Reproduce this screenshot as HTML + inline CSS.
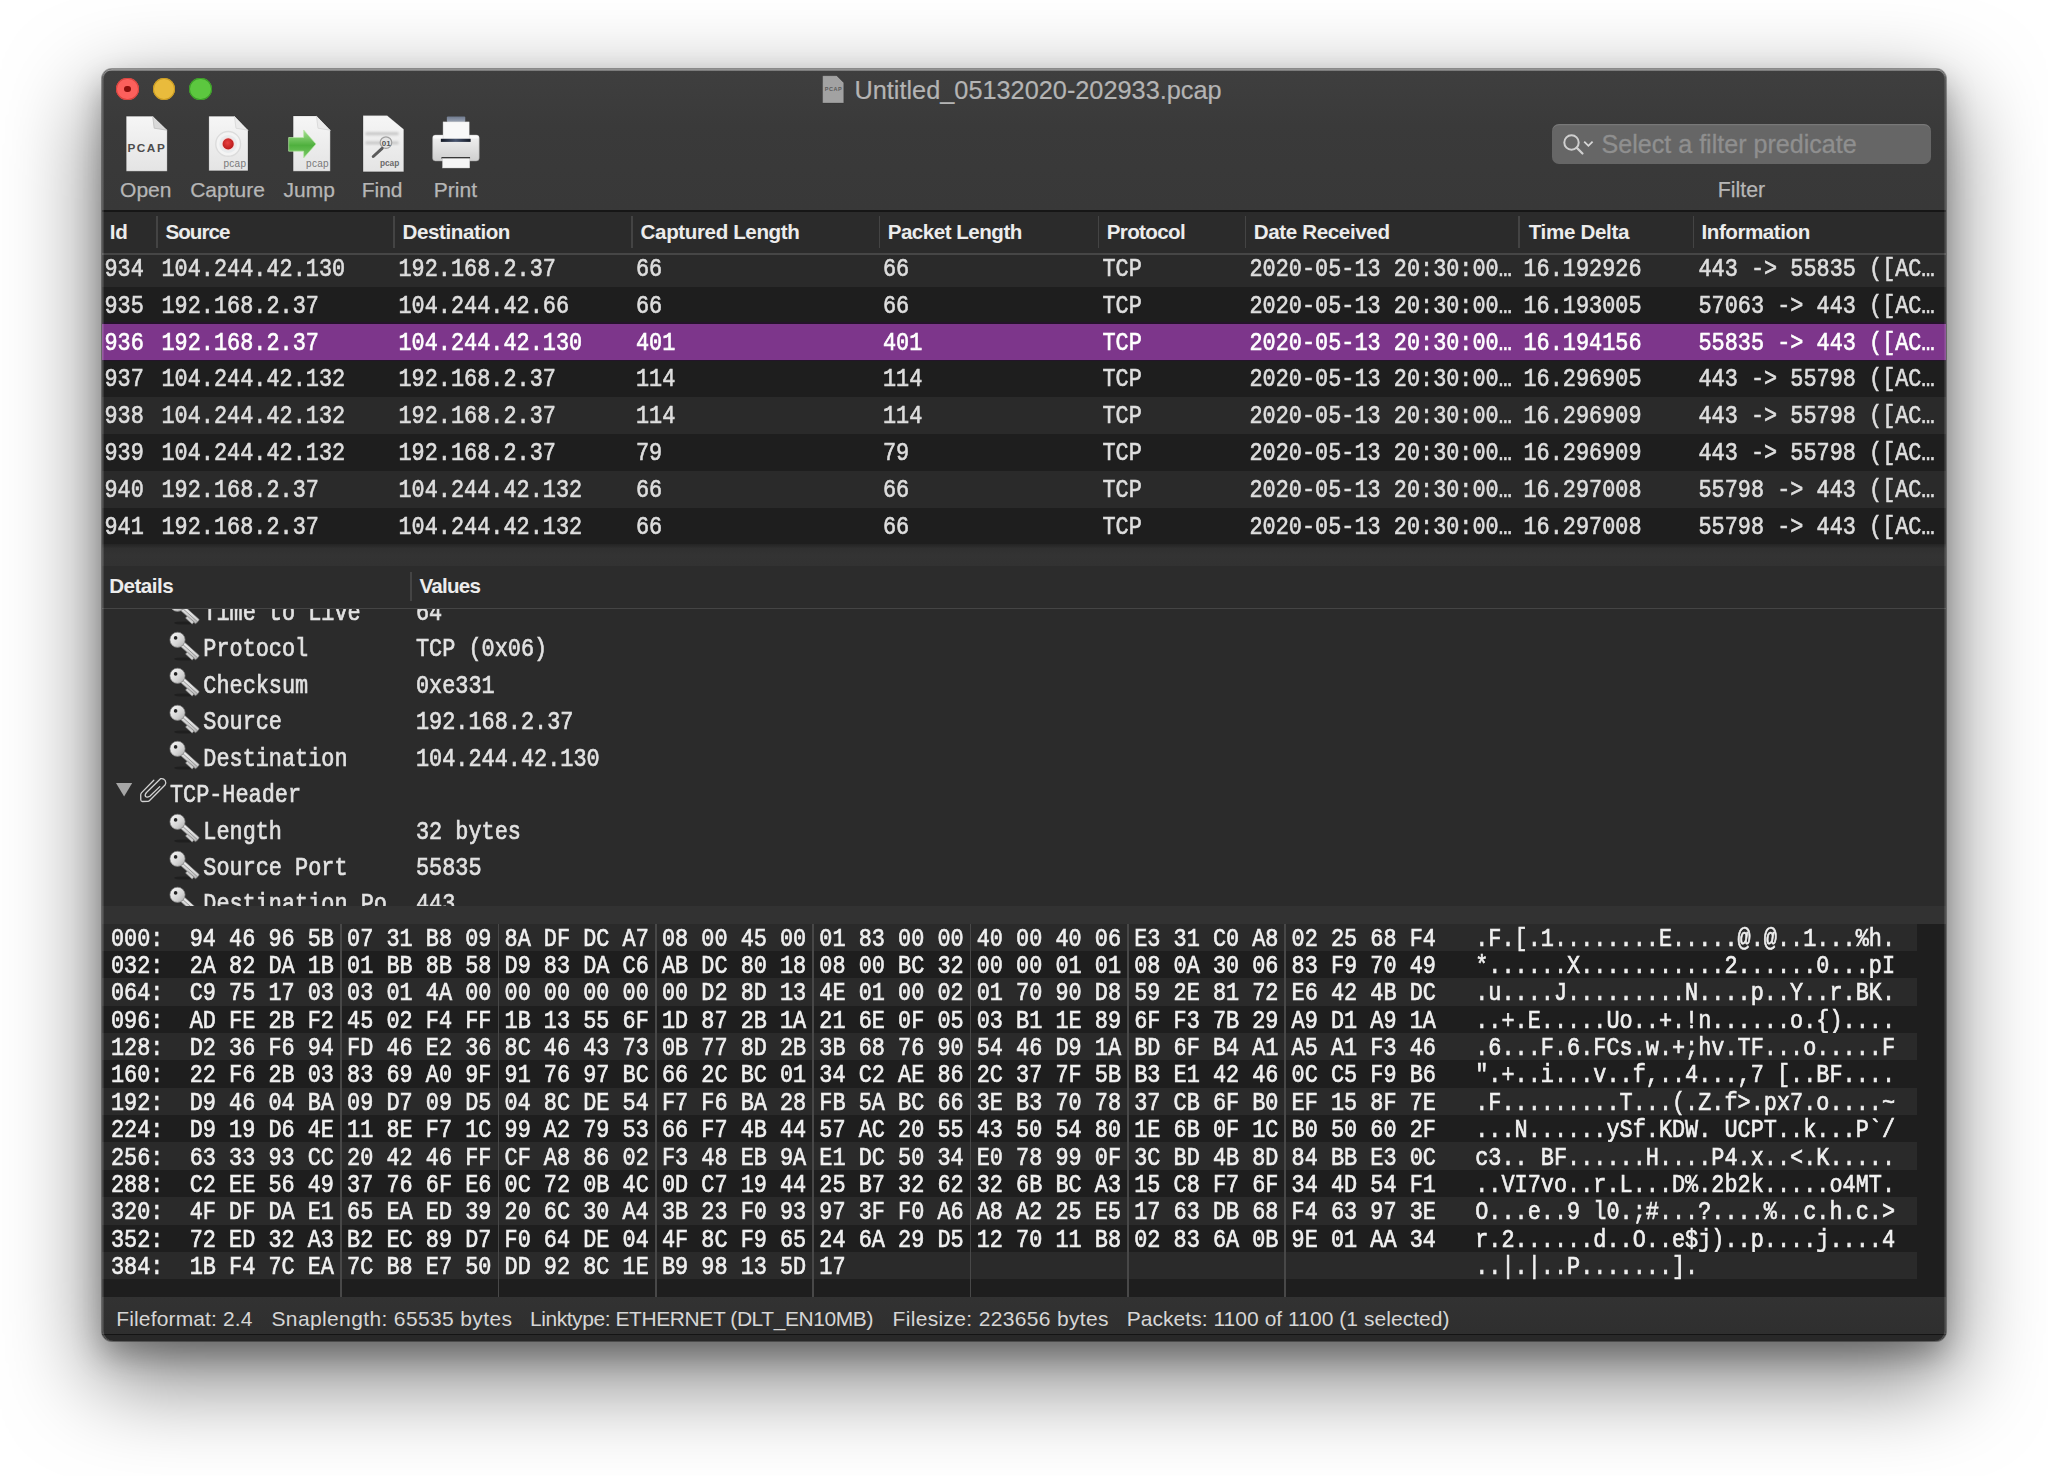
<!DOCTYPE html><html><head><meta charset="utf-8"><style>
html,body{margin:0;padding:0;background:#fff;width:2048px;height:1476px;overflow:hidden}
*{box-sizing:border-box}
.win{position:absolute;left:101.6px;top:68.8px;width:1844.8000000000002px;height:1272.7px;border-radius:10px;overflow:hidden;
 background:#2b2b2b;}
.shadow{position:absolute;left:101.6px;top:68.8px;width:1844.8000000000002px;height:1272.7px;border-radius:10px;
 box-shadow:0 34px 90px 6px rgba(0,0,0,0.50), 0 14px 30px rgba(0,0,0,0.28), 0 0 0 1px rgba(0,0,0,0.35);}
.a{position:absolute}
.m{font-family:"Liberation Mono", monospace;font-size:21.867px;white-space:pre;line-height:30px;-webkit-text-stroke:0.55px currentColor}
.s{font-family:"Liberation Sans", sans-serif;white-space:pre;}
.hd{font-size:21.6px;line-height:30px;color:#ededed;-webkit-text-stroke:0.6px #ededed}
.sy{display:inline-block;transform:scaleY(1.22);transform-origin:50% 20.00px;}
</style></head><body>
<div class="shadow"></div>
<div class="win">
<div class="a" style="left:0;top:0;width:100%;height:141.2px;background:linear-gradient(#3f3f3f,#3a3a3a 40%,#383838)"></div>
<div class="a" style="left:0;top:141.2px;width:100%;height:2px;background:#161616"></div>
<div class="a" style="left:0;top:0;width:100%;height:2px;background:rgba(255,255,255,0.22)"></div>
<div class="a" style="left:14.400000000000002px;top:8.900000000000002px;width:22.6px;height:22.6px;border-radius:50%;background:#fc605c;box-shadow:inset 0 0 0 1px #d8443f"></div>
<div class="a" style="left:51.10000000000001px;top:8.900000000000002px;width:22.6px;height:22.6px;border-radius:50%;background:#e9bb3c;box-shadow:inset 0 0 0 1px #c99a22"></div>
<div class="a" style="left:87.40000000000002px;top:8.900000000000002px;width:22.6px;height:22.6px;border-radius:50%;background:#5cc73f;box-shadow:inset 0 0 0 1px #3a9a27"></div>
<div class="a" style="left:22.400000000000002px;top:16.900000000000002px;width:6.6px;height:6.6px;border-radius:50%;background:#8c0f0c"></div>
<svg class="a" style="left:718.4px;top:4.200000000000003px" width="26" height="32" viewBox="820 73 26 32"><path d="M822.6 75.7 L836.7 75.7 L843.7 82.7 L843.7 102.9 L822.6 102.9 Z" fill="#a2a2a2" stroke="rgba(0,0,0,0.3)" stroke-width="0.5"/><text x="833.5" y="91" text-anchor="middle" font-family="Liberation Sans" font-weight="bold" font-size="5.5" letter-spacing="0.6" fill="#5a5a5a">PCAP</text></svg>
<div class="a s" style="left:752.9px;top:6.200000000000003px;font-size:25.3px;line-height:30px;color:#b4b4b4;-webkit-text-stroke:0.2px #b4b4b4">Untitled_05132020-202933.pcap</div>
<svg class="a" style="left:0;top:0" width="1844.8000000000002" height="141.2" viewBox="101.6 68.8 1844.8000000000002 141.2"><defs><linearGradient id="dg" x1="0" y1="0" x2="0" y2="1"><stop offset="0" stop-color="#f6f6f6"/><stop offset="1" stop-color="#e4e4e4"/></linearGradient><linearGradient id="ga" x1="0" y1="0" x2="0" y2="1"><stop offset="0" stop-color="#a6e090"/><stop offset="0.55" stop-color="#4fb03e"/><stop offset="1" stop-color="#7ccb68"/></linearGradient><radialGradient id="rd" cx="0.45" cy="0.4" r="0.6"><stop offset="0" stop-color="#e84040"/><stop offset="1" stop-color="#b81a1a"/></radialGradient><linearGradient id="pb" x1="0" y1="0" x2="0" y2="1"><stop offset="0" stop-color="#f2f2f2"/><stop offset="1" stop-color="#cfcfcf"/></linearGradient><filter id="bl"><feGaussianBlur stdDeviation="1.2"/></filter></defs><path d="M125.8 116 L152.2 116 L166.7 130 L166.7 171 L125.8 171 Z" fill="url(#dg)" stroke="rgba(0,0,0,0.25)" stroke-width="0.6"/><path d="M152.2 116 L153.7 128 L166.7 130 Z" fill="#d9d9d9"/><path d="M152.2 116 L153.7 128 L166.7 130" fill="none" stroke="#bdbdbd" stroke-width="0.8"/><text x="146.4" y="152.2" text-anchor="middle" font-family="Liberation Sans" font-weight="bold" font-size="11.8" letter-spacing="1.5" fill="#4c4c4c">PCAP</text><path d="M208.4 116 L234 116 L247.5 130 L247.5 170.5 L208.4 170.5 Z" fill="url(#dg)" stroke="rgba(0,0,0,0.25)" stroke-width="0.6"/><path d="M234 116 L235.5 128 L247.5 130 Z" fill="#ebebeb"/><path d="M234 116 L235.5 128 L247.5 130" fill="none" stroke="#d6d6d6" stroke-width="0.8"/><circle cx="227.7" cy="143.7" r="12.4" fill="#f4f4f4" stroke="#dcdcdc" stroke-width="1.4"/><circle cx="227.7" cy="143.7" r="9" fill="#e8ebed"/><circle cx="227.7" cy="143.7" r="6.6" fill="#f6dcdc"/><circle cx="227.7" cy="143.7" r="5.6" fill="url(#rd)"/><text x="245.8" y="166.4" text-anchor="end" font-family="Liberation Sans" font-size="10" letter-spacing="0.3" fill="#7a7a7a">pcap</text><path d="M292.7 115.7 L316 115.7 L329.8 130 L329.8 171 L292.7 171 Z" fill="url(#dg)" stroke="rgba(0,0,0,0.25)" stroke-width="0.6"/><path d="M316 115.7 L317.5 128 L329.8 130 Z" fill="#ebebeb"/><path d="M316 115.7 L317.5 128 L329.8 130" fill="none" stroke="#d6d6d6" stroke-width="0.8"/><path d="M288.2 137.3 L303.2 137.3 L303.2 129.8 L315.5 143.8 L303.2 157.8 L303.2 151 L288.2 151 Z" fill="url(#ga)" stroke="#b8e6a8" stroke-width="0.7"/><text x="328.5" y="166.6" text-anchor="end" font-family="Liberation Sans" font-size="10" letter-spacing="0.3" fill="#7a7a7a">pcap</text><path d="M362.6 115.4 L386.7 115.4 L403.3 129 L403.3 171.6 L362.6 171.6 Z" fill="url(#dg)" stroke="rgba(0,0,0,0.25)" stroke-width="0.6"/><g filter="url(#bl)"><rect x="365" y="132" width="33" height="3" fill="#c8c8c8"/><rect x="365" y="141.2" width="33" height="3" fill="#c8c8c8"/></g><circle cx="385.5" cy="142.4" r="5.8" fill="#e4e4e4" stroke="#a0a0a0" stroke-width="1.2"/><text x="385.8" y="145.6" text-anchor="middle" font-family="Liberation Sans" font-weight="bold" font-size="8" fill="#555">01</text><path d="M381.7 148.1 L372.8 156.3" stroke="#5a5a5a" stroke-width="3" stroke-linecap="round"/><text x="398.8" y="165.6" text-anchor="end" font-family="Liberation Sans" font-weight="bold" font-size="8.3" fill="#6a6a6a">pcap</text><defs><linearGradient id="pt" x1="0" y1="0" x2="0" y2="1"><stop offset="0" stop-color="#6f7a8e"/><stop offset="1" stop-color="#9aa3b3"/></linearGradient><linearGradient id="ps" x1="0" y1="0" x2="1" y2="0"><stop offset="0" stop-color="#141a26"/><stop offset="0.5" stop-color="#46536e"/><stop offset="1" stop-color="#141a26"/></linearGradient></defs><rect x="446.4" y="116.3" width="18.4" height="5.6" rx="1" fill="url(#pt)"/><rect x="432.1" y="134.8" width="46.7" height="26" rx="3" fill="url(#pb)" stroke="#9a9a9a" stroke-width="0.5"/><rect x="432.6" y="135.3" width="45.7" height="3" rx="1.5" fill="#fafafa"/><rect x="442.6" y="121.7" width="26.1" height="17" fill="#f8f8f8" stroke="#cfcfcf" stroke-width="0.4"/><rect x="440.4" y="138.6" width="29.8" height="3.1" fill="url(#ps)"/><rect x="441" y="156.9" width="28.6" height="1.6" fill="#2a2a2a"/><rect x="442" y="158.3" width="27.3" height="9.5" fill="#f6f6f6" stroke="#c4c4c4" stroke-width="0.4"/></svg>
<div class="a s" style="left:-15.799999999999983px;width:120px;text-align:center;top:109.2px;font-size:21px;line-height:24px;color:#b6b6b6;-webkit-text-stroke:0.25px #b6b6b6">Open</div>
<div class="a s" style="left:65.9px;width:120px;text-align:center;top:109.2px;font-size:21px;line-height:24px;color:#b6b6b6;-webkit-text-stroke:0.25px #b6b6b6">Capture</div>
<div class="a s" style="left:147.70000000000002px;width:120px;text-align:center;top:109.2px;font-size:21px;line-height:24px;color:#b6b6b6;-webkit-text-stroke:0.25px #b6b6b6">Jump</div>
<div class="a s" style="left:220.5px;width:120px;text-align:center;top:109.2px;font-size:21px;line-height:24px;color:#b6b6b6;-webkit-text-stroke:0.25px #b6b6b6">Find</div>
<div class="a s" style="left:293.79999999999995px;width:120px;text-align:center;top:109.2px;font-size:21px;line-height:24px;color:#b6b6b6;-webkit-text-stroke:0.25px #b6b6b6">Print</div>
<div class="a" style="left:1450.6000000000001px;top:55.7px;width:379.0px;height:39.400000000000006px;border-radius:7px;background:#666666;box-shadow:inset 0 1.2px 0 rgba(255,255,255,0.12)"></div>
<svg class="a" style="left:1458.4px;top:63.2px" width="36" height="26" viewBox="0 0 36 26"><circle cx="11.5" cy="10.5" r="7.2" fill="none" stroke="#cfcfcf" stroke-width="2"/><path d="M16.6 15.6 L22.5 21.5" stroke="#cfcfcf" stroke-width="2.2" stroke-linecap="round"/><path d="M24.2 9.6 L28.4 13.8 L32.6 9.6" fill="none" stroke="#d6d6d6" stroke-width="1.8"/></svg>
<div class="a s" style="left:1499.9px;top:60.7px;font-size:25.1px;line-height:30px;color:#8f8f8f;-webkit-text-stroke:0.3px #8f8f8f">Select a filter predicate</div>
<div class="a s" style="left:1579.9px;width:120px;text-align:center;top:109.2px;font-size:21.3px;line-height:24px;color:#b6b6b6;-webkit-text-stroke:0.25px #b6b6b6">Filter</div>
<div class="a" style="left:0;top:143.2px;width:100%;height:41.5px;background:#2b2b2b"></div>
<div class="a" style="left:54.45000000000002px;top:147.7px;width:1.5px;height:31.30000000000001px;background:#444"></div>
<div class="a" style="left:291.65px;top:147.7px;width:1.5px;height:31.30000000000001px;background:#444"></div>
<div class="a" style="left:529.65px;top:147.7px;width:1.5px;height:31.30000000000001px;background:#444"></div>
<div class="a" style="left:776.9499999999999px;top:147.7px;width:1.5px;height:31.30000000000001px;background:#444"></div>
<div class="a" style="left:995.9499999999999px;top:147.7px;width:1.5px;height:31.30000000000001px;background:#444"></div>
<div class="a" style="left:1143.0500000000002px;top:147.7px;width:1.5px;height:31.30000000000001px;background:#444"></div>
<div class="a" style="left:1416.8500000000001px;top:147.7px;width:1.5px;height:31.30000000000001px;background:#444"></div>
<div class="a" style="left:1591.3500000000001px;top:147.7px;width:1.5px;height:31.30000000000001px;background:#444"></div>
<div class="a s" style="left:8.100000000000005px;top:147.8px;font-size:20.6px;line-height:30px;font-weight:bold;letter-spacing:-0.250px;color:#ececec">Id</div>
<div class="a s" style="left:63.8px;top:147.8px;font-size:20.6px;line-height:30px;font-weight:bold;letter-spacing:-0.947px;color:#ececec">Source</div>
<div class="a s" style="left:300.99999999999994px;top:147.8px;font-size:20.6px;line-height:30px;font-weight:bold;letter-spacing:-0.427px;color:#ececec">Destination</div>
<div class="a s" style="left:539.0px;top:147.8px;font-size:20.6px;line-height:30px;font-weight:bold;letter-spacing:-0.393px;color:#ececec">Captured Length</div>
<div class="a s" style="left:786.1px;top:147.8px;font-size:20.6px;line-height:30px;font-weight:bold;letter-spacing:-0.508px;color:#ececec">Packet Length</div>
<div class="a s" style="left:1005.1px;top:147.8px;font-size:20.6px;line-height:30px;font-weight:bold;letter-spacing:-0.633px;color:#ececec">Protocol</div>
<div class="a s" style="left:1152.1000000000001px;top:147.8px;font-size:20.6px;line-height:30px;font-weight:bold;letter-spacing:-0.375px;color:#ececec">Date Received</div>
<div class="a s" style="left:1427.1000000000001px;top:147.8px;font-size:20.6px;line-height:30px;font-weight:bold;letter-spacing:-0.337px;color:#ececec">Time Delta</div>
<div class="a s" style="left:1599.9px;top:147.8px;font-size:20.6px;line-height:30px;font-weight:bold;letter-spacing:-0.450px;color:#ececec">Information</div>
<div class="a" style="left:0;top:186.2px;width:100%;height:289.5px;overflow:hidden">
<div class="a" style="left:0;top:-5.099999999999994px;width:100%;height:36.9px;background:#2a2a2a"></div>
<div class="a m" style="left:2.9000000000000057px;top:0.80px;color:#dedede"><span class="sy">934</span></div>
<div class="a m" style="left:59.900000000000006px;top:0.80px;color:#dedede"><span class="sy">104.244.42.130</span></div>
<div class="a m" style="left:296.9px;top:0.80px;color:#dedede"><span class="sy">192.168.2.37</span></div>
<div class="a m" style="left:534.4px;top:0.80px;color:#dedede"><span class="sy">66</span></div>
<div class="a m" style="left:781.4px;top:0.80px;color:#dedede"><span class="sy">66</span></div>
<div class="a m" style="left:1000.9px;top:0.80px;color:#dedede"><span class="sy">TCP</span></div>
<div class="a m" style="left:1147.9px;top:0.80px;color:#dedede"><span class="sy">2020-05-13 20:30:00…</span></div>
<div class="a m" style="left:1421.9px;top:0.80px;color:#dedede"><span class="sy">16.192926</span></div>
<div class="a m" style="left:1596.9px;top:0.80px;color:#dedede"><span class="sy">443 -&gt; 55835 ([AC…</span></div>
<div class="a" style="left:0;top:31.80000000000001px;width:100%;height:36.9px;background:#1e1e1e"></div>
<div class="a m" style="left:2.9000000000000057px;top:37.70px;color:#dedede"><span class="sy">935</span></div>
<div class="a m" style="left:59.900000000000006px;top:37.70px;color:#dedede"><span class="sy">192.168.2.37</span></div>
<div class="a m" style="left:296.9px;top:37.70px;color:#dedede"><span class="sy">104.244.42.66</span></div>
<div class="a m" style="left:534.4px;top:37.70px;color:#dedede"><span class="sy">66</span></div>
<div class="a m" style="left:781.4px;top:37.70px;color:#dedede"><span class="sy">66</span></div>
<div class="a m" style="left:1000.9px;top:37.70px;color:#dedede"><span class="sy">TCP</span></div>
<div class="a m" style="left:1147.9px;top:37.70px;color:#dedede"><span class="sy">2020-05-13 20:30:00…</span></div>
<div class="a m" style="left:1421.9px;top:37.70px;color:#dedede"><span class="sy">16.193005</span></div>
<div class="a m" style="left:1596.9px;top:37.70px;color:#dedede"><span class="sy">57063 -&gt; 443 ([AC…</span></div>
<div class="a" style="left:0;top:68.69999999999999px;width:100%;height:36.9px;background:#7d368b"></div>
<div class="a" style="left:0;top:67.49999999999999px;width:100%;height:1.6px;background:#24142a"></div>
<div class="a" style="left:0;top:105.19999999999999px;width:100%;height:1.6px;background:#24142a"></div>
<div class="a m" style="left:2.9000000000000057px;top:74.60px;color:#ffffff"><span class="sy">936</span></div>
<div class="a m" style="left:59.900000000000006px;top:74.60px;color:#ffffff"><span class="sy">192.168.2.37</span></div>
<div class="a m" style="left:296.9px;top:74.60px;color:#ffffff"><span class="sy">104.244.42.130</span></div>
<div class="a m" style="left:534.4px;top:74.60px;color:#ffffff"><span class="sy">401</span></div>
<div class="a m" style="left:781.4px;top:74.60px;color:#ffffff"><span class="sy">401</span></div>
<div class="a m" style="left:1000.9px;top:74.60px;color:#ffffff"><span class="sy">TCP</span></div>
<div class="a m" style="left:1147.9px;top:74.60px;color:#ffffff"><span class="sy">2020-05-13 20:30:00…</span></div>
<div class="a m" style="left:1421.9px;top:74.60px;color:#ffffff"><span class="sy">16.194156</span></div>
<div class="a m" style="left:1596.9px;top:74.60px;color:#ffffff"><span class="sy">55835 -&gt; 443 ([AC…</span></div>
<div class="a" style="left:0;top:105.60000000000002px;width:100%;height:36.9px;background:#1e1e1e"></div>
<div class="a m" style="left:2.9000000000000057px;top:111.50px;color:#dedede"><span class="sy">937</span></div>
<div class="a m" style="left:59.900000000000006px;top:111.50px;color:#dedede"><span class="sy">104.244.42.132</span></div>
<div class="a m" style="left:296.9px;top:111.50px;color:#dedede"><span class="sy">192.168.2.37</span></div>
<div class="a m" style="left:534.4px;top:111.50px;color:#dedede"><span class="sy">114</span></div>
<div class="a m" style="left:781.4px;top:111.50px;color:#dedede"><span class="sy">114</span></div>
<div class="a m" style="left:1000.9px;top:111.50px;color:#dedede"><span class="sy">TCP</span></div>
<div class="a m" style="left:1147.9px;top:111.50px;color:#dedede"><span class="sy">2020-05-13 20:30:00…</span></div>
<div class="a m" style="left:1421.9px;top:111.50px;color:#dedede"><span class="sy">16.296905</span></div>
<div class="a m" style="left:1596.9px;top:111.50px;color:#dedede"><span class="sy">443 -&gt; 55798 ([AC…</span></div>
<div class="a" style="left:0;top:142.5px;width:100%;height:36.9px;background:#2a2a2a"></div>
<div class="a m" style="left:2.9000000000000057px;top:148.40px;color:#dedede"><span class="sy">938</span></div>
<div class="a m" style="left:59.900000000000006px;top:148.40px;color:#dedede"><span class="sy">104.244.42.132</span></div>
<div class="a m" style="left:296.9px;top:148.40px;color:#dedede"><span class="sy">192.168.2.37</span></div>
<div class="a m" style="left:534.4px;top:148.40px;color:#dedede"><span class="sy">114</span></div>
<div class="a m" style="left:781.4px;top:148.40px;color:#dedede"><span class="sy">114</span></div>
<div class="a m" style="left:1000.9px;top:148.40px;color:#dedede"><span class="sy">TCP</span></div>
<div class="a m" style="left:1147.9px;top:148.40px;color:#dedede"><span class="sy">2020-05-13 20:30:00…</span></div>
<div class="a m" style="left:1421.9px;top:148.40px;color:#dedede"><span class="sy">16.296909</span></div>
<div class="a m" style="left:1596.9px;top:148.40px;color:#dedede"><span class="sy">443 -&gt; 55798 ([AC…</span></div>
<div class="a" style="left:0;top:179.39999999999998px;width:100%;height:36.9px;background:#1e1e1e"></div>
<div class="a m" style="left:2.9000000000000057px;top:185.30px;color:#dedede"><span class="sy">939</span></div>
<div class="a m" style="left:59.900000000000006px;top:185.30px;color:#dedede"><span class="sy">104.244.42.132</span></div>
<div class="a m" style="left:296.9px;top:185.30px;color:#dedede"><span class="sy">192.168.2.37</span></div>
<div class="a m" style="left:534.4px;top:185.30px;color:#dedede"><span class="sy">79</span></div>
<div class="a m" style="left:781.4px;top:185.30px;color:#dedede"><span class="sy">79</span></div>
<div class="a m" style="left:1000.9px;top:185.30px;color:#dedede"><span class="sy">TCP</span></div>
<div class="a m" style="left:1147.9px;top:185.30px;color:#dedede"><span class="sy">2020-05-13 20:30:00…</span></div>
<div class="a m" style="left:1421.9px;top:185.30px;color:#dedede"><span class="sy">16.296909</span></div>
<div class="a m" style="left:1596.9px;top:185.30px;color:#dedede"><span class="sy">443 -&gt; 55798 ([AC…</span></div>
<div class="a" style="left:0;top:216.29999999999995px;width:100%;height:36.9px;background:#2a2a2a"></div>
<div class="a m" style="left:2.9000000000000057px;top:222.20px;color:#dedede"><span class="sy">940</span></div>
<div class="a m" style="left:59.900000000000006px;top:222.20px;color:#dedede"><span class="sy">192.168.2.37</span></div>
<div class="a m" style="left:296.9px;top:222.20px;color:#dedede"><span class="sy">104.244.42.132</span></div>
<div class="a m" style="left:534.4px;top:222.20px;color:#dedede"><span class="sy">66</span></div>
<div class="a m" style="left:781.4px;top:222.20px;color:#dedede"><span class="sy">66</span></div>
<div class="a m" style="left:1000.9px;top:222.20px;color:#dedede"><span class="sy">TCP</span></div>
<div class="a m" style="left:1147.9px;top:222.20px;color:#dedede"><span class="sy">2020-05-13 20:30:00…</span></div>
<div class="a m" style="left:1421.9px;top:222.20px;color:#dedede"><span class="sy">16.297008</span></div>
<div class="a m" style="left:1596.9px;top:222.20px;color:#dedede"><span class="sy">55798 -&gt; 443 ([AC…</span></div>
<div class="a" style="left:0;top:253.20000000000005px;width:100%;height:36.9px;background:#1e1e1e"></div>
<div class="a m" style="left:2.9000000000000057px;top:259.10px;color:#dedede"><span class="sy">941</span></div>
<div class="a m" style="left:59.900000000000006px;top:259.10px;color:#dedede"><span class="sy">192.168.2.37</span></div>
<div class="a m" style="left:296.9px;top:259.10px;color:#dedede"><span class="sy">104.244.42.132</span></div>
<div class="a m" style="left:534.4px;top:259.10px;color:#dedede"><span class="sy">66</span></div>
<div class="a m" style="left:781.4px;top:259.10px;color:#dedede"><span class="sy">66</span></div>
<div class="a m" style="left:1000.9px;top:259.10px;color:#dedede"><span class="sy">TCP</span></div>
<div class="a m" style="left:1147.9px;top:259.10px;color:#dedede"><span class="sy">2020-05-13 20:30:00…</span></div>
<div class="a m" style="left:1421.9px;top:259.10px;color:#dedede"><span class="sy">16.297008</span></div>
<div class="a m" style="left:1596.9px;top:259.10px;color:#dedede"><span class="sy">55798 -&gt; 443 ([AC…</span></div>
</div>
<div class="a" style="left:0;top:183.8px;width:100%;height:2.4px;background:#464646"></div>
<div class="a" style="left:0;top:475.7px;width:100%;height:21.899999999999977px;background:linear-gradient(#242424,#303030 20%,#333 50%,#323232)"></div>
<div class="a" style="left:0;top:497.59999999999997px;width:100%;height:41.60000000000002px;background:#2c2c2c"></div>
<div class="a" style="left:0;top:539.2px;width:100%;height:2px;background:#454545"></div>
<div class="a" style="left:308.54999999999995px;top:503.2px;width:1.5px;height:29px;background:#444"></div>
<div class="a s" style="left:7.600000000000006px;top:501.8px;font-size:20.6px;line-height:30px;font-weight:bold;letter-spacing:-0.511px;color:#ececec">Details</div>
<div class="a s" style="left:317.8px;top:501.8px;font-size:20.6px;line-height:30px;font-weight:bold;letter-spacing:-0.760px;color:#ececec">Values</div>
<div class="a" style="left:0;top:540.4000000000001px;width:100%;height:296.79999999999995px;background:#2b2b2b;overflow:hidden">
<div class="a" style="left:66.70000000000002px;top:-15.650000000000091px;width:34px;height:32px"><svg width="34" height="32" viewBox="0 0 34 32"><defs><linearGradient id="kg0" x1="0" y1="0" x2="1" y2="1"><stop offset="0" stop-color="#fbfbfb"/><stop offset="0.6" stop-color="#d4d4d4"/><stop offset="1" stop-color="#a8a8a8"/></linearGradient></defs><ellipse cx="16" cy="29" rx="10" ry="1.6" fill="rgba(0,0,0,0.28)"/><g transform="rotate(42 9.5 9.8)"><rect x="11" y="6.9" width="25.5" height="5.8" rx="1" fill="url(#kg0)" stroke="#707070" stroke-width="0.6"/><rect x="25" y="12.3" width="9" height="2.8" fill="#cfcfcf" stroke="#707070" stroke-width="0.5"/><line x1="14" y1="9.8" x2="36" y2="9.8" stroke="#8a8a8a" stroke-width="0.8"/></g><circle cx="9.5" cy="9.8" r="7.6" fill="url(#kg0)" stroke="#7a7a7a" stroke-width="0.7"/><circle cx="7.6" cy="7.9" r="1.8" fill="#222"/></svg></div>
<div class="a m" style="left:101.70000000000002px;top:-9.350000000000136px;color:#e2e2e2"><span class="sy">Time to Live</span></div>
<div class="a m" style="left:314.4px;top:-9.350000000000136px;color:#e2e2e2"><span class="sy">64</span></div>
<div class="a" style="left:66.70000000000002px;top:20.799999999999955px;width:34px;height:32px"><svg width="34" height="32" viewBox="0 0 34 32"><defs><linearGradient id="kg1" x1="0" y1="0" x2="1" y2="1"><stop offset="0" stop-color="#fbfbfb"/><stop offset="0.6" stop-color="#d4d4d4"/><stop offset="1" stop-color="#a8a8a8"/></linearGradient></defs><ellipse cx="16" cy="29" rx="10" ry="1.6" fill="rgba(0,0,0,0.28)"/><g transform="rotate(42 9.5 9.8)"><rect x="11" y="6.9" width="25.5" height="5.8" rx="1" fill="url(#kg1)" stroke="#707070" stroke-width="0.6"/><rect x="25" y="12.3" width="9" height="2.8" fill="#cfcfcf" stroke="#707070" stroke-width="0.5"/><line x1="14" y1="9.8" x2="36" y2="9.8" stroke="#8a8a8a" stroke-width="0.8"/></g><circle cx="9.5" cy="9.8" r="7.6" fill="url(#kg1)" stroke="#7a7a7a" stroke-width="0.7"/><circle cx="7.6" cy="7.9" r="1.8" fill="#222"/></svg></div>
<div class="a m" style="left:101.70000000000002px;top:27.09999999999991px;color:#e2e2e2"><span class="sy">Protocol</span></div>
<div class="a m" style="left:314.4px;top:27.09999999999991px;color:#e2e2e2"><span class="sy">TCP (0x06)</span></div>
<div class="a" style="left:66.70000000000002px;top:57.25px;width:34px;height:32px"><svg width="34" height="32" viewBox="0 0 34 32"><defs><linearGradient id="kg2" x1="0" y1="0" x2="1" y2="1"><stop offset="0" stop-color="#fbfbfb"/><stop offset="0.6" stop-color="#d4d4d4"/><stop offset="1" stop-color="#a8a8a8"/></linearGradient></defs><ellipse cx="16" cy="29" rx="10" ry="1.6" fill="rgba(0,0,0,0.28)"/><g transform="rotate(42 9.5 9.8)"><rect x="11" y="6.9" width="25.5" height="5.8" rx="1" fill="url(#kg2)" stroke="#707070" stroke-width="0.6"/><rect x="25" y="12.3" width="9" height="2.8" fill="#cfcfcf" stroke="#707070" stroke-width="0.5"/><line x1="14" y1="9.8" x2="36" y2="9.8" stroke="#8a8a8a" stroke-width="0.8"/></g><circle cx="9.5" cy="9.8" r="7.6" fill="url(#kg2)" stroke="#7a7a7a" stroke-width="0.7"/><circle cx="7.6" cy="7.9" r="1.8" fill="#222"/></svg></div>
<div class="a m" style="left:101.70000000000002px;top:63.549999999999955px;color:#e2e2e2"><span class="sy">Checksum</span></div>
<div class="a m" style="left:314.4px;top:63.549999999999955px;color:#e2e2e2"><span class="sy">0xe331</span></div>
<div class="a" style="left:66.70000000000002px;top:93.69999999999993px;width:34px;height:32px"><svg width="34" height="32" viewBox="0 0 34 32"><defs><linearGradient id="kg3" x1="0" y1="0" x2="1" y2="1"><stop offset="0" stop-color="#fbfbfb"/><stop offset="0.6" stop-color="#d4d4d4"/><stop offset="1" stop-color="#a8a8a8"/></linearGradient></defs><ellipse cx="16" cy="29" rx="10" ry="1.6" fill="rgba(0,0,0,0.28)"/><g transform="rotate(42 9.5 9.8)"><rect x="11" y="6.9" width="25.5" height="5.8" rx="1" fill="url(#kg3)" stroke="#707070" stroke-width="0.6"/><rect x="25" y="12.3" width="9" height="2.8" fill="#cfcfcf" stroke="#707070" stroke-width="0.5"/><line x1="14" y1="9.8" x2="36" y2="9.8" stroke="#8a8a8a" stroke-width="0.8"/></g><circle cx="9.5" cy="9.8" r="7.6" fill="url(#kg3)" stroke="#7a7a7a" stroke-width="0.7"/><circle cx="7.6" cy="7.9" r="1.8" fill="#222"/></svg></div>
<div class="a m" style="left:101.70000000000002px;top:99.99999999999989px;color:#e2e2e2"><span class="sy">Source</span></div>
<div class="a m" style="left:314.4px;top:99.99999999999989px;color:#e2e2e2"><span class="sy">192.168.2.37</span></div>
<div class="a" style="left:66.70000000000002px;top:130.14999999999998px;width:34px;height:32px"><svg width="34" height="32" viewBox="0 0 34 32"><defs><linearGradient id="kg4" x1="0" y1="0" x2="1" y2="1"><stop offset="0" stop-color="#fbfbfb"/><stop offset="0.6" stop-color="#d4d4d4"/><stop offset="1" stop-color="#a8a8a8"/></linearGradient></defs><ellipse cx="16" cy="29" rx="10" ry="1.6" fill="rgba(0,0,0,0.28)"/><g transform="rotate(42 9.5 9.8)"><rect x="11" y="6.9" width="25.5" height="5.8" rx="1" fill="url(#kg4)" stroke="#707070" stroke-width="0.6"/><rect x="25" y="12.3" width="9" height="2.8" fill="#cfcfcf" stroke="#707070" stroke-width="0.5"/><line x1="14" y1="9.8" x2="36" y2="9.8" stroke="#8a8a8a" stroke-width="0.8"/></g><circle cx="9.5" cy="9.8" r="7.6" fill="url(#kg4)" stroke="#7a7a7a" stroke-width="0.7"/><circle cx="7.6" cy="7.9" r="1.8" fill="#222"/></svg></div>
<div class="a m" style="left:101.70000000000002px;top:136.44999999999993px;color:#e2e2e2"><span class="sy">Destination</span></div>
<div class="a m" style="left:314.4px;top:136.44999999999993px;color:#e2e2e2"><span class="sy">104.244.42.130</span></div>
<svg class="a" style="left:14.100000000000009px;top:173.69999999999982px" width="17" height="14" viewBox="0 0 17 14"><path d="M0 0 L16.2 0 L8.1 13.4 Z" fill="#a6a6a6"/></svg>
<div class="a" style="left:34.400000000000006px;top:166.29999999999984px;width:32px;height:30px"><svg width="32" height="30" viewBox="136 776 32 30"><path d="M153.8 781.2 L141.4 793.9 Q140.6 795 140.7 796.5 L140.8 801 Q141 802.5 142.5 802.5 L148 802.3 Q148.9 802.2 149.6 801.5 L165 786 Q166.5 784 165.2 781.5 Q163.5 779 160.5 779.7 L146.5 793.5 Q144.5 796 145.5 797.5 Q147 798.8 149.8 797.3 L159.8 787.6" fill="none" stroke="#d2d2d2" stroke-width="1.3" stroke-linecap="round" stroke-linejoin="round"/></svg></div>
<div class="a m" style="left:68.30000000000001px;top:172.89999999999986px;color:#e2e2e2"><span class="sy">TCP-Header</span></div>
<div class="a" style="left:66.70000000000002px;top:203.04999999999995px;width:34px;height:32px"><svg width="34" height="32" viewBox="0 0 34 32"><defs><linearGradient id="kg6" x1="0" y1="0" x2="1" y2="1"><stop offset="0" stop-color="#fbfbfb"/><stop offset="0.6" stop-color="#d4d4d4"/><stop offset="1" stop-color="#a8a8a8"/></linearGradient></defs><ellipse cx="16" cy="29" rx="10" ry="1.6" fill="rgba(0,0,0,0.28)"/><g transform="rotate(42 9.5 9.8)"><rect x="11" y="6.9" width="25.5" height="5.8" rx="1" fill="url(#kg6)" stroke="#707070" stroke-width="0.6"/><rect x="25" y="12.3" width="9" height="2.8" fill="#cfcfcf" stroke="#707070" stroke-width="0.5"/><line x1="14" y1="9.8" x2="36" y2="9.8" stroke="#8a8a8a" stroke-width="0.8"/></g><circle cx="9.5" cy="9.8" r="7.6" fill="url(#kg6)" stroke="#7a7a7a" stroke-width="0.7"/><circle cx="7.6" cy="7.9" r="1.8" fill="#222"/></svg></div>
<div class="a m" style="left:101.70000000000002px;top:209.3499999999999px;color:#e2e2e2"><span class="sy">Length</span></div>
<div class="a m" style="left:314.4px;top:209.3499999999999px;color:#e2e2e2"><span class="sy">32 bytes</span></div>
<div class="a" style="left:66.70000000000002px;top:239.5px;width:34px;height:32px"><svg width="34" height="32" viewBox="0 0 34 32"><defs><linearGradient id="kg7" x1="0" y1="0" x2="1" y2="1"><stop offset="0" stop-color="#fbfbfb"/><stop offset="0.6" stop-color="#d4d4d4"/><stop offset="1" stop-color="#a8a8a8"/></linearGradient></defs><ellipse cx="16" cy="29" rx="10" ry="1.6" fill="rgba(0,0,0,0.28)"/><g transform="rotate(42 9.5 9.8)"><rect x="11" y="6.9" width="25.5" height="5.8" rx="1" fill="url(#kg7)" stroke="#707070" stroke-width="0.6"/><rect x="25" y="12.3" width="9" height="2.8" fill="#cfcfcf" stroke="#707070" stroke-width="0.5"/><line x1="14" y1="9.8" x2="36" y2="9.8" stroke="#8a8a8a" stroke-width="0.8"/></g><circle cx="9.5" cy="9.8" r="7.6" fill="url(#kg7)" stroke="#7a7a7a" stroke-width="0.7"/><circle cx="7.6" cy="7.9" r="1.8" fill="#222"/></svg></div>
<div class="a m" style="left:101.70000000000002px;top:245.79999999999995px;color:#e2e2e2"><span class="sy">Source Port</span></div>
<div class="a m" style="left:314.4px;top:245.79999999999995px;color:#e2e2e2"><span class="sy">55835</span></div>
<div class="a" style="left:66.70000000000002px;top:275.95000000000005px;width:34px;height:32px"><svg width="34" height="32" viewBox="0 0 34 32"><defs><linearGradient id="kg8" x1="0" y1="0" x2="1" y2="1"><stop offset="0" stop-color="#fbfbfb"/><stop offset="0.6" stop-color="#d4d4d4"/><stop offset="1" stop-color="#a8a8a8"/></linearGradient></defs><ellipse cx="16" cy="29" rx="10" ry="1.6" fill="rgba(0,0,0,0.28)"/><g transform="rotate(42 9.5 9.8)"><rect x="11" y="6.9" width="25.5" height="5.8" rx="1" fill="url(#kg8)" stroke="#707070" stroke-width="0.6"/><rect x="25" y="12.3" width="9" height="2.8" fill="#cfcfcf" stroke="#707070" stroke-width="0.5"/><line x1="14" y1="9.8" x2="36" y2="9.8" stroke="#8a8a8a" stroke-width="0.8"/></g><circle cx="9.5" cy="9.8" r="7.6" fill="url(#kg8)" stroke="#7a7a7a" stroke-width="0.7"/><circle cx="7.6" cy="7.9" r="1.8" fill="#222"/></svg></div>
<div class="a m" style="left:101.70000000000002px;top:282.25px;color:#e2e2e2"><span class="sy">Destination Po</span></div>
<div class="a m" style="left:314.4px;top:282.25px;color:#e2e2e2"><span class="sy">443</span></div>
</div>
<div class="a" style="left:0;top:837.2px;width:100%;height:18.299999999999955px;background:#323232"></div>
<div class="a" style="left:0;top:855.5px;width:100%;height:372.70000000000005px;background:#1e1e1e;overflow:hidden">
<div class="a" style="left:0;top:-0.8999999999999773px;width:1815.4px;height:27.376923076923074px;background:#2a2a2a"></div>
<div class="a m" style="left:9.400000000000006px;top:1.30px;color:#f0f0f0"><span class="sy">000:  94 46 96 5B 07 31 B8 09 8A DF DC A7 08 00 45 00 01 83 00 00 40 00 40 06 E3 31 C0 A8 02 25 68 F4   .F.[.1........E.....@.@..1...%h.</span></div>
<div class="a m" style="left:9.400000000000006px;top:28.68px;color:#f0f0f0"><span class="sy">032:  2A 82 DA 1B 01 BB 8B 58 D9 83 DA C6 AB DC 80 18 08 00 BC 32 00 00 01 01 08 0A 30 06 83 F9 70 49   *......X...........2......0...pI</span></div>
<div class="a" style="left:0;top:53.85384615384612px;width:1815.4px;height:27.376923076923074px;background:#2a2a2a"></div>
<div class="a m" style="left:9.400000000000006px;top:56.05px;color:#f0f0f0"><span class="sy">064:  C9 75 17 03 03 01 4A 00 00 00 00 00 00 D2 8D 13 4E 01 00 02 01 70 90 D8 59 2E 81 72 E6 42 4B DC   .u....J.........N....p..Y..r.BK.</span></div>
<div class="a m" style="left:9.400000000000006px;top:83.43px;color:#f0f0f0"><span class="sy">096:  AD FE 2B F2 45 02 F4 FF 1B 13 55 6F 1D 87 2B 1A 21 6E 0F 05 03 B1 1E 89 6F F3 7B 29 A9 D1 A9 1A   ..+.E.....Uo..+.!n......o.{)....</span></div>
<div class="a" style="left:0;top:108.60769230769233px;width:1815.4px;height:27.376923076923074px;background:#2a2a2a"></div>
<div class="a m" style="left:9.400000000000006px;top:110.81px;color:#f0f0f0"><span class="sy">128:  D2 36 F6 94 FD 46 E2 36 8C 46 43 73 0B 77 8D 2B 3B 68 76 90 54 46 D9 1A BD 6F B4 A1 A5 A1 F3 46   .6...F.6.FCs.w.+;hv.TF...o.....F</span></div>
<div class="a m" style="left:9.400000000000006px;top:138.18px;color:#f0f0f0"><span class="sy">160:  22 F6 2B 03 83 69 A0 9F 91 76 97 BC 66 2C BC 01 34 C2 AE 86 2C 37 7F 5B B3 E1 42 46 0C C5 F9 B6   &quot;.+..i...v..f,..4...,7 [..BF....</span></div>
<div class="a" style="left:0;top:163.36153846153843px;width:1815.4px;height:27.376923076923074px;background:#2a2a2a"></div>
<div class="a m" style="left:9.400000000000006px;top:165.56px;color:#f0f0f0"><span class="sy">192:  D9 46 04 BA 09 D7 09 D5 04 8C DE 54 F7 F6 BA 28 FB 5A BC 66 3E B3 70 78 37 CB 6F B0 EF 15 8F 7E   .F.........T...(.Z.f&gt;.px7.o....~</span></div>
<div class="a m" style="left:9.400000000000006px;top:192.94px;color:#f0f0f0"><span class="sy">224:  D9 19 D6 4E 11 8E F7 1C 99 A2 79 53 66 F7 4B 44 57 AC 20 55 43 50 54 80 1E 6B 0F 1C B0 50 60 2F   ...N......ySf.KDW. UCPT..k...P`/</span></div>
<div class="a" style="left:0;top:218.11538461538453px;width:1815.4px;height:27.376923076923074px;background:#2a2a2a"></div>
<div class="a m" style="left:9.400000000000006px;top:220.32px;color:#f0f0f0"><span class="sy">256:  63 33 93 CC 20 42 46 FF CF A8 86 02 F3 48 EB 9A E1 DC 50 34 E0 78 99 0F 3C BD 4B 8D 84 BB E3 0C   c3.. BF......H....P4.x..&lt;.K.....</span></div>
<div class="a m" style="left:9.400000000000006px;top:247.69px;color:#f0f0f0"><span class="sy">288:  C2 EE 56 49 37 76 6F E6 0C 72 0B 4C 0D C7 19 44 25 B7 32 62 32 6B BC A3 15 C8 F7 6F 34 4D 54 F1   ..VI7vo..r.L...D%.2b2k.....o4MT.</span></div>
<div class="a" style="left:0;top:272.8692307692306px;width:1815.4px;height:27.376923076923074px;background:#2a2a2a"></div>
<div class="a m" style="left:9.400000000000006px;top:275.07px;color:#f0f0f0"><span class="sy">320:  4F DF DA E1 65 EA ED 39 20 6C 30 A4 3B 23 F0 93 97 3F F0 A6 A8 A2 25 E5 17 63 DB 68 F4 63 97 3E   O...e..9 l0.;#...?....%..c.h.c.&gt;</span></div>
<div class="a m" style="left:9.400000000000006px;top:302.45px;color:#f0f0f0"><span class="sy">352:  72 ED 32 A3 B2 EC 89 D7 F0 64 DE 04 4F 8C F9 65 24 6A 29 D5 12 70 11 B8 02 83 6A 0B 9E 01 AA 34   r.2......d..O..e$j)..p....j....4</span></div>
<div class="a" style="left:0;top:327.62307692307695px;width:1815.4px;height:27.376923076923074px;background:#2a2a2a"></div>
<div class="a m" style="left:9.400000000000006px;top:329.82px;color:#f0f0f0"><span class="sy">384:  1B F4 7C EA 7C B8 E7 50 DD 92 8C 1E B9 98 13 5D 17                                                ..|.|..P.......].</span></div>
</div>
<div class="a" style="left:238.7px;top:855.5px;width:1.8px;height:372.70000000000005px;background:#484848"></div>
<div class="a" style="left:396.04999999999995px;top:855.5px;width:1.8px;height:372.70000000000005px;background:#484848"></div>
<div class="a" style="left:553.4px;top:855.5px;width:1.8px;height:372.70000000000005px;background:#484848"></div>
<div class="a" style="left:710.75px;top:855.5px;width:1.8px;height:372.70000000000005px;background:#484848"></div>
<div class="a" style="left:868.0999999999999px;top:855.5px;width:1.8px;height:372.70000000000005px;background:#484848"></div>
<div class="a" style="left:1025.45px;top:855.5px;width:1.8px;height:372.70000000000005px;background:#484848"></div>
<div class="a" style="left:1182.8px;top:855.5px;width:1.8px;height:372.70000000000005px;background:#484848"></div>
<div class="a" style="left:0;top:1228.2px;width:100%;height:44.5px;background:linear-gradient(#323232,#2e2e2e)"></div>
<div class="a" style="left:0;top:1264.8px;width:100%;height:7.900000000000091px;background:#282828;border-top:1.6px solid #141414"></div>
<div class="a s" style="left:14.700000000000003px;top:1235.1000000000001px;font-size:21px;line-height:30px;letter-spacing:0.144px;color:#d6d6d6">Fileformat: 2.4</div>
<div class="a s" style="left:169.9px;top:1235.1000000000001px;font-size:21px;line-height:30px;letter-spacing:0.370px;color:#d6d6d6">Snaplength: 65535 bytes</div>
<div class="a s" style="left:428.29999999999995px;top:1235.1000000000001px;font-size:21px;line-height:30px;letter-spacing:-0.426px;color:#d6d6d6">Linktype: ETHERNET (DLT_EN10MB)</div>
<div class="a s" style="left:790.9px;top:1235.1000000000001px;font-size:21px;line-height:30px;letter-spacing:0.336px;color:#d6d6d6">Filesize: 223656 bytes</div>
<div class="a s" style="left:1025.1000000000001px;top:1235.1000000000001px;font-size:21px;line-height:30px;letter-spacing:0.042px;color:#d6d6d6">Packets: 1100 of 1100 (1 selected)</div>
<div class="a" style="left:0;top:0;width:100%;height:100%;border-radius:10px;box-shadow:inset 0 1.5px 0 rgba(255,255,255,0.28), inset 1.6px 0 0 rgba(255,255,255,0.2), inset -1.6px 0 0 rgba(255,255,255,0.16)"></div>
</div>
</body></html>
